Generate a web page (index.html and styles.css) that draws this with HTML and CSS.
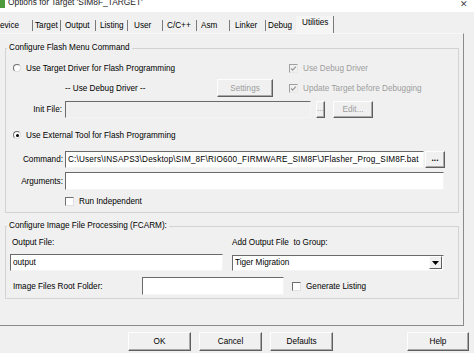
FILE: index.html
```html
<!DOCTYPE html>
<html>
<head>
<meta charset="utf-8">
<title>Options for Target</title>
<link rel="stylesheet" href="styles.css">
</head>
<body>
<div class="dialog">
  <div class="titlebar">
    <div class="title-row">
      <span class="app-icon"></span>
      <span class="title-text">Options for Target 'SIM8F_TARGET'</span>
      <span class="close">✕</span>
    </div>
  </div>

  <div class="tabs">
    <span class="tab t-device">Device</span>
    <span class="tab t-target">Target</span>
    <span class="tab t-output">Output</span>
    <span class="tab t-listing">Listing</span>
    <span class="tab t-user">User</span>
    <span class="tab t-cc">C/C++</span>
    <span class="tab t-asm">Asm</span>
    <span class="tab t-linker">Linker</span>
    <span class="tab t-debug">Debug</span>
    <span class="tab t-util active">Utilities</span>
  </div>

  <div class="panel">
    <fieldset class="group g1">
      <legend>Configure Flash Menu Command</legend>

      <div class="row row-a">
        <div class="left-cell">
          <span class="radio"></span>
          <span class="opt-text">Use Target Driver for Flash Programming</span>
        </div>
        <div class="right-cell">
          <span class="check disabled checked"><svg viewBox="0 0 9 9" width="7" height="7"><polyline points="1.5,4.5 3.5,6.5 7.5,2" fill="none" stroke="#9a9a9a" stroke-width="1.6"/></svg></span>
          <span class="opt-text dis">Use Debug Driver</span>
        </div>
      </div>

      <div class="row row-b">
        <div class="left-cell between">
          <span class="debug-driver">-- Use Debug Driver --</span>
          <span class="btn btn-settings dis">Settings</span>
        </div>
        <div class="right-cell">
          <span class="check disabled checked"><svg viewBox="0 0 9 9" width="7" height="7"><polyline points="1.5,4.5 3.5,6.5 7.5,2" fill="none" stroke="#9a9a9a" stroke-width="1.6"/></svg></span>
          <span class="opt-text dis">Update Target before Debugging</span>
        </div>
      </div>

      <div class="row row-c">
        <label class="lbl lbl-init">Init File:</label>
        <span class="field field-dis init-field"></span>
        <span class="btn btn-dots-small dis">...</span>
        <span class="btn btn-edit dis">Edit...</span>
      </div>

      <div class="row row-d">
        <span class="radio on"></span>
        <span class="opt-text">Use External Tool for Flash Programming</span>
      </div>

      <div class="row row-e">
        <label class="lbl lbl-cmd">Command:</label>
        <span class="field cmd-field">C:\Users\INSAPS3\Desktop\SIM_8F\RIO600_FIRMWARE_SIM8F\JFlasher_Prog_SIM8F.bat</span>
        <span class="btn btn-dots">...</span>
      </div>

      <div class="row row-f">
        <label class="lbl lbl-args">Arguments:</label>
        <span class="field args-field"></span>
      </div>

      <div class="row row-g">
        <span class="check"></span>
        <span class="opt-text">Run Independent</span>
      </div>
    </fieldset>

    <fieldset class="group g2">
      <legend>Configure Image File Processing (FCARM):</legend>

      <div class="row row-h">
        <span class="out-lbl">Output File:</span>
        <span>Add Output File&nbsp; to Group:</span>
      </div>

      <div class="row row-i">
        <span class="field out-field">output</span>
        <span class="field select-field">
          <span class="sel-text">Tiger Migration</span>
          <span class="drop-btn"><svg viewBox="0 0 7 4" width="7" height="4"><polygon points="0,0 7,0 3.5,4" fill="#000"/></svg></span>
        </span>
      </div>

      <div class="row row-j">
        <span class="root-lbl">Image Files Root Folder:</span>
        <span class="field root-field"></span>
        <span class="check gen-check"></span>
        <span class="opt-text">Generate Listing</span>
      </div>
    </fieldset>
  </div>

  <div class="buttons">
    <span class="btn dlg-btn">OK</span>
    <span class="btn dlg-btn">Cancel</span>
    <span class="btn dlg-btn">Defaults</span>
    <span class="btn dlg-btn help">Help</span>
  </div>
</div>
</body>
</html>
```

FILE: styles.css
```css
* { box-sizing: border-box; }

html, body {
  margin: 0;
  padding: 0;
  background: #f0f0f0;
}

body {
  width: 474px;
  height: 353px;
  overflow: hidden;
  font-family: "Liberation Sans", Arial, sans-serif;
  font-size: 8.2px;
  color: #000;
}

.dialog {
  width: 474px;
  height: 353px;
  overflow: hidden;
}

/* title bar */
.titlebar {
  height: 12px;
  background: #ffffff;
  overflow: hidden;
}

.title-row {
  display: flex;
  align-items: center;
  height: 14px;
  margin-top: -5px;
  font-size: 8.4px;
  color: #222;
}

.app-icon {
  width: 5px;
  height: 10px;
  background: #4f9a3c;
  margin-top: 2px;
}

.title-text {
  margin-left: 3px;
  white-space: nowrap;
}

.close {
  margin-left: auto;
  margin-right: 6px;
  font-size: 9px;
  color: #444;
  margin-top: 3px;
}

/* tabs */
.tabs {
  height: 21px;
  display: flex;
  align-items: flex-end;
  margin-left: -9px;
  padding-bottom: 1px;
}

.tab {
  height: 11px;
  line-height: 11px;
  margin-bottom: 1px;
  border-right: 1px solid #7a7a7a;
  white-space: nowrap;
  flex: none;
}

.t-device { width: 42px; padding-left: 3px; }
.t-target { width: 28px; padding-left: 2px; }
.t-output { width: 35px; padding-left: 4px; }
.t-listing { width: 32px; padding-left: 4px; }
.t-user { width: 35px; padding-left: 6px; }
.t-cc { width: 34px; padding-left: 4px; }
.t-asm { width: 33px; padding-left: 4px; }
.t-linker { width: 36px; padding-left: 5px; }
.t-debug { width: 30px; padding-left: 2px; border-right: none; }

.tab.active {
  width: 38px;
  padding-left: 6px;
  height: 17px;
  line-height: 13px;
  margin-bottom: -1px;
  background: #f5f5f5;
  border-right: 1px solid #7a7a7a;
}

/* panel */
.panel {
  height: 293px;
  width: 464px;
  border-top: 1px solid #f8f8f8;
  border-right: 1px solid #8c8c8c;
  border-bottom: 1px solid #8c8c8c;
  padding-top: 9px;
}

.group {
  width: 454px;
  margin: 0 0 0 5px;
  padding: 0;
  border: 1px solid #d3d3d3;
  min-width: 0;
}

.group legend {
  padding: 0 2px;
  margin-left: 1px;
  line-height: 10px;
  height: 10px;
}

.g1 { padding-bottom: 5px; }
.g2 { margin-top: 8px; padding-bottom: 3px; }

.row {
  display: flex;
  align-items: center;
  white-space: nowrap;
}

.left-cell {
  width: 282px;
  display: flex;
  align-items: center;
  flex: none;
}

.left-cell.between {
  justify-content: space-between;
  padding-right: 15px;
}

.right-cell {
  display: flex;
  align-items: center;
}

.row-a { height: 12px; margin-top: 9px; }
.row-a .left-cell { padding-left: 7px; }

.row-b { height: 18px; margin-top: 5px; }
.row-b .left-cell { padding-left: 59px; }

.row-c { height: 17px; margin-top: 4px; }
.row-d { height: 12px; margin-top: 11px; padding-left: 7px; }
.row-e { height: 17px; margin-top: 10px; }
.row-f { height: 18px; margin-top: 4px; }
.row-g { height: 12px; margin-top: 5px; padding-left: 59px; }

.opt-text { margin-left: 5px; }
.dis { color: #9d9d9d; }

/* radios & checks */
.radio {
  width: 8px;
  height: 8px;
  border-radius: 50%;
  background: #fff;
  border: 1px solid;
  border-color: #6f6f6f #dcdcdc #dcdcdc #6f6f6f;
  flex: none;
  display: flex;
  align-items: center;
  justify-content: center;
}

.radio.on::after {
  content: "";
  width: 3px;
  height: 3px;
  border-radius: 50%;
  background: #000;
}

.check {
  width: 9px;
  height: 9px;
  background: #fff;
  border: 1px solid;
  border-color: #6f6f6f #e2e2e2 #e2e2e2 #6f6f6f;
  flex: none;
  display: flex;
  align-items: center;
  justify-content: center;
}

.check.disabled {
  background: #f0f0f0;
  border-color: #a0a0a0 #e8e8e8 #e8e8e8 #a0a0a0;
}

.right-cell .check { margin-left: 1px; }

/* labels */
.lbl {
  text-align: right;
  flex: none;
}

.lbl-init { width: 56px; margin-right: 3px; }
.lbl-cmd { width: 57px; margin-right: 2px; }
.lbl-args { width: 57px; margin-right: 2px; }

/* fields */
.field {
  display: flex;
  align-items: center;
  background: #fff;
  border: 1px solid;
  border-color: #6a6a6a #f4f4f4 #f4f4f4 #6a6a6a;
  padding-left: 2px;
  overflow: hidden;
  white-space: nowrap;
  flex: none;
}

.field-dis { background: #f0f0f0; }

.init-field { width: 246px; height: 17px; }
.cmd-field { width: 359px; height: 17px; letter-spacing: 0.18px; }
.args-field { width: 379px; height: 18px; }

/* buttons */
.btn {
  display: flex;
  align-items: center;
  justify-content: center;
  background: #f0f0f0;
  border: 1px solid;
  border-color: #fdfdfd #5f5f5f #5f5f5f #fdfdfd;
  box-shadow: inset -1px -1px 0 #a9a9a9;
  flex: none;
  white-space: nowrap;
}

.btn-settings { width: 56px; height: 18px; }
.btn-dots-small { width: 9px; height: 17px; margin-left: 5px; padding-bottom: 3px; }
.btn-edit { width: 40px; height: 17px; margin-left: 8px; }
.btn-dots { width: 20px; height: 17px; margin-left: 1px; padding-bottom: 3px; font-weight: bold; }

/* group 2 */
.row-h { height: 10px; margin-top: 6px; }
.out-lbl { width: 226px; padding-left: 6px; flex: none; }

.row-i { height: 17px; margin-top: 7px; }
.out-field { width: 213px; height: 17px; margin-left: 4px; }
.select-field {
  width: 212px;
  height: 16px;
  margin-left: 9px;
  padding-right: 1px;
}
.sel-text { flex: 1; }
.drop-btn {
  width: 13px;
  height: 13px;
  display: flex;
  align-items: center;
  justify-content: center;
  background: #f0f0f0;
  border: 1px solid;
  border-color: #fdfdfd #5f5f5f #5f5f5f #fdfdfd;
}

.row-j { height: 18px; margin-top: 6px; }
.root-lbl { width: 136px; padding-left: 7px; flex: none; }
.root-field { width: 142px; height: 18px; }
.gen-check { margin-left: 8px; }

/* dialog buttons */
.buttons {
  display: flex;
  margin-top: 6px;
  padding-left: 128px;
  padding-right: 5px;
  gap: 8px;
}

.dlg-btn {
  width: 63px;
  height: 19px;
}

.help { margin-left: auto; width: 62px; }
```
